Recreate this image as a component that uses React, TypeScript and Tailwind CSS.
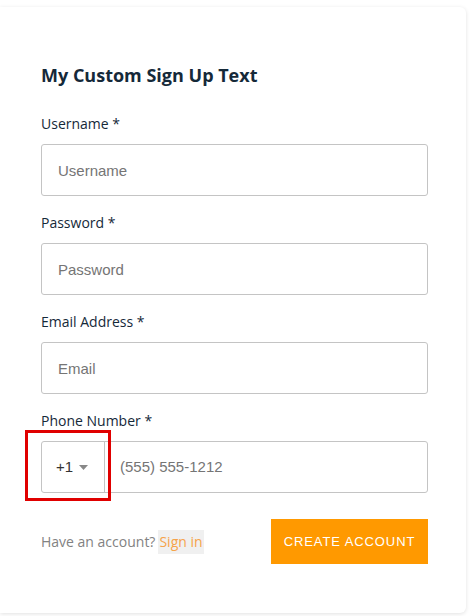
import React from 'react'

const fields = [
  { label: 'Username', placeholder: 'Username', type: 'text' },
  { label: 'Password', placeholder: 'Password', type: 'password' },
  { label: 'Email Address', placeholder: 'Email', type: 'email' },
]

const sans = { fontFamily: '"Open Sans", "Noto Sans", sans-serif' }

export default function App() {
  return (
    <div className="min-h-[616px] w-[474px] bg-white pt-[7px]" style={sans}>
      <div className="relative h-[606px] w-[466px] rounded-r-md bg-white shadow-[0_1px_4px_rgba(0,0,0,0.12)]">
        <div className="pl-[41px] pr-[38px] pt-[54px]">
          <h1 className="h-[28px] text-[18px] font-bold leading-[28px] text-[#152939]">
            My Custom Sign Up Text
          </h1>

          <div className="mt-[25px] flex flex-col gap-[17px]">
            {fields.map((f) => (
              <div key={f.label} className="flex flex-col gap-[10px]">
                <label className="h-[20px] text-[14px] leading-[20px] text-[#152939]">
                  {f.label} *
                </label>
                <input
                  type={f.type}
                  placeholder={f.placeholder}
                  className="h-[52px] w-full rounded-[3px] border border-[#c4c4c4] px-[16px] text-[15px] text-[#333] outline-none placeholder:text-[#757575]"
                  style={{ fontFamily: '"Liberation Sans", Arial, sans-serif' }}
                />
              </div>
            ))}

            <div className="flex flex-col gap-[10px]">
              <label className="h-[20px] text-[14px] leading-[20px] text-[#152939]">
                Phone Number *
              </label>
              <div
                className="flex h-[52px] w-full rounded-[3px] border border-[#c4c4c4]"
                style={{ fontFamily: '"Liberation Sans", Arial, sans-serif' }}
              >
                <div className="flex w-[63px] items-center gap-[6px] border-r border-[#c4c4c4] pl-[14px] text-[15px] text-[#333]">
                  <span>+1</span>
                  <svg width="9" height="5" viewBox="0 0 9 5">
                    <path d="M0 0h9L4.5 5z" fill="#888" />
                  </svg>
                </div>
                <input
                  type="tel"
                  placeholder="(555) 555-1212"
                  className="flex-1 px-[15px] text-[15px] outline-none placeholder:text-[#757575]"
                />
              </div>
            </div>
          </div>

          <div className="mt-[26px] flex items-center justify-between">
            <div className="flex items-center text-[14px] text-[#828282]">
              <span>Have an account?</span>
              <span className="ml-[3px] bg-[#f0f0f0] px-[1px] leading-[24px] text-[#f6a34a]">Sign in</span>
            </div>
            <button
              className="h-[45px] w-[157px] bg-[#ff9900] text-[13px] tracking-[0.9px] text-white"
              style={{ fontFamily: '"Liberation Sans", Arial, sans-serif' }}
            >
              CREATE ACCOUNT
            </button>
          </div>
        </div>

        <div className="pointer-events-none absolute left-[25px] top-[423px] h-[71px] w-[86px] border-[3px] border-[#e00000]" />
      </div>
    </div>
  )
}
